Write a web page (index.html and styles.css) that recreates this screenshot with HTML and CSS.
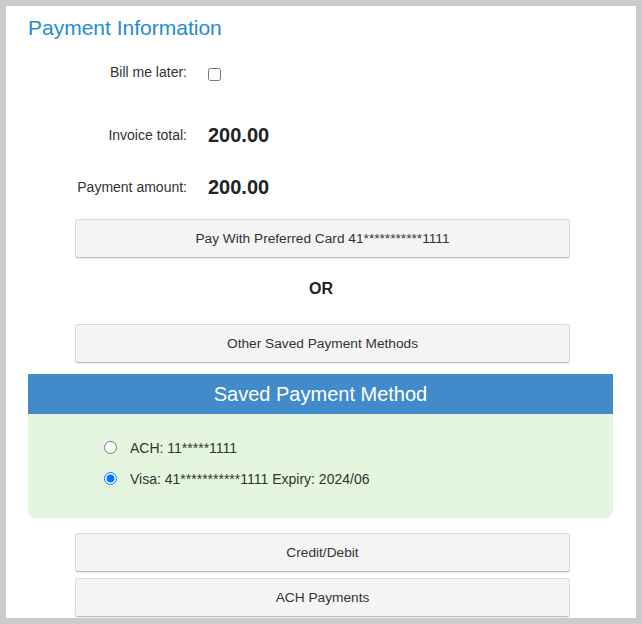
FILE: index.html
```html
<!DOCTYPE html>
<html>
<head>
<meta charset="utf-8">
<link rel="stylesheet" href="styles.css">
</head>
<body>
<div class="page">
  <h1 class="title">Payment Information</h1>
  <div class="form">
    <div class="row row-bill">
      <label class="label" for="bill">Bill me later:</label>
      <div class="value"><input type="checkbox" id="bill" class="check"></div>
    </div>
    <div class="row row-invoice">
      <span class="label">Invoice total:</span>
      <span class="value amount">200.00</span>
    </div>
    <div class="row row-payment">
      <span class="label">Payment amount:</span>
      <span class="value amount">200.00</span>
    </div>
  </div>
  <button class="btn btn-first">Pay With Preferred Card 41***********1111</button>
  <div class="or">OR</div>
  <button class="btn">Other Saved Payment Methods</button>
  <section class="saved">
    <div class="saved-head">Saved Payment Method</div>
    <div class="saved-body">
      <label class="opt"><input type="radio" name="pm" class="radio"><span>ACH: 11*****1111</span></label>
      <label class="opt"><input type="radio" name="pm" class="radio" checked><span>Visa: 41***********1111 Expiry: 2024/06</span></label>
    </div>
  </section>
  <button class="btn btn-credit">Credit/Debit</button>
  <button class="btn btn-ach">ACH Payments</button>
</div>
</body>
</html>
```

FILE: styles.css
```css
html, body {
  margin: 0;
  padding: 0;
}
body {
  background: #cbcbcb;
  font-family: "Liberation Sans", Arial, sans-serif;
  color: #333;
  padding: 6px;
  height: 624px;
  box-sizing: border-box;
  overflow: hidden;
}
.page {
  background: #fff;
  width: 630px;
  height: 612px;
  padding-top: 10px;
  box-sizing: border-box;
  display: flex;
  flex-direction: column;
  align-items: center;
  overflow: hidden;
}
.title {
  align-self: flex-start;
  margin: 0 0 0 22px;
  font-size: 21px;
  line-height: 24px;
  font-weight: normal;
  color: #1f8bd3;
}
.form {
  align-self: stretch;
  display: flex;
  flex-direction: column;
  margin-top: 18px;
}
.row {
  display: flex;
  align-items: center;
  height: 30px;
  gap: 21px;
}
.row-invoice { margin-top: 32px; }
.row-payment { margin-top: 22px; }
.label {
  width: 181px;
  text-align: right;
  font-size: 14px;
  color: #333;
}
.row-bill .label { position: relative; top: -1px; }
.value { display: flex; align-items: center; }
.check {
  margin: 2px 0 0 0;
  width: 13px;
  height: 13px;
}
.amount {
  font-size: 20px;
  font-weight: bold;
  color: #222;
}
.btn {
  display: block;
  width: 495px;
  height: 39px;
  margin-left: 3px;
  background: #f4f4f4;
  border: 1px solid #dadada;
  border-bottom-color: #bdbdbd;
  border-radius: 3px;
  box-shadow: 0 1px 1px rgba(0,0,0,0.08);
  font-family: "Liberation Sans", Arial, sans-serif;
  font-size: 13.7px;
  color: #333;
  padding: 0;
  cursor: pointer;
}
.btn-first { margin-top: 17px; }
.or {
  font-size: 16px;
  font-weight: bold;
  line-height: 20px;
  margin: 21px 0 25px;
  color: #222;
}
.saved {
  width: 585px;
  margin-top: 11px;
  margin-left: -1px;
}
.saved-head {
  background: #428bca;
  color: #fff;
  height: 40px;
  display: flex;
  align-items: center;
  justify-content: center;
  font-size: 20px;
}
.saved-body {
  background: #e4f6e0;
  height: 104px;
  box-sizing: border-box;
  padding: 18px 0 0 76px;
  border-radius: 0 0 8px 8px;
  display: flex;
  flex-direction: column;
}
.opt {
  display: flex;
  align-items: center;
  height: 31px;
  font-size: 14px;
  color: #333;
}
.radio {
  margin: 0 13px 0 0;
  width: 13px;
  height: 13px;
}
.btn-credit { margin-top: 15px; }
.btn-ach { margin-top: 6px; }
```
